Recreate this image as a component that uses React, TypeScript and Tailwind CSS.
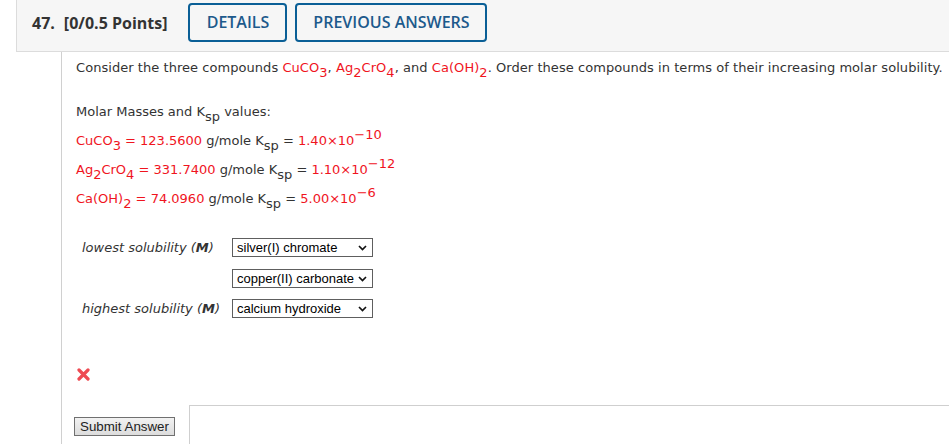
import React from "react";

const R = ({ children }: { children: React.ReactNode }) => (
  <span className="text-[#f0141e]">{children}</span>
);
const Sub = ({ children }: { children: React.ReactNode }) => (
  <span className="relative top-[5px]">{children}</span>
);
const Sup = ({ children }: { children: React.ReactNode }) => (
  <span className="relative -top-[6px]">{children}</span>
);

const Chevron = () => (
  <svg width="9" height="6" viewBox="0 0 9 6" className="absolute right-[5px] top-[6px] pointer-events-none">
    <path d="M1 1 L4.5 4.5 L8 1" fill="none" stroke="#111" strokeWidth="1.7" />
  </svg>
);

const Sel = ({ value }: { value: string }) => (
  <div className="relative w-[141px] h-[19px] border border-[#5e5e5e] bg-white">
    <div className="pl-[4px] text-[13px] leading-[17px] text-black whitespace-nowrap" style={{ fontFamily: '"Liberation Sans", Arial, sans-serif' }}>
      {value}
    </div>
    <Chevron />
  </div>
);

export default function App() {
  const verd = { fontFamily: '"DejaVu Sans", Verdana, sans-serif' };
  return (
    <div className="w-[949px] h-[444px] overflow-hidden bg-white">
      <div
        className="ml-[16px] h-[52px] bg-[#f6f6f6] border-l border-b border-[#dcdcdc] flex items-center"
        style={{ fontFamily: '"Open Sans", sans-serif' }}
      >
        <div className="pl-[15px] flex items-center text-[16px] font-bold text-[#333] -mt-[6px]">
          <span>47.</span>
          <span className="ml-[9px]">[0/0.5 Points]</span>
        </div>
        <div className="ml-[21px] -mt-[7px] h-[39px] w-[99px] border-2 border-[#0a5f96] rounded-[4px] flex items-center justify-center text-[16px] font-semibold text-[#1d5a8c]">
          DETAILS
        </div>
        <div className="ml-[8px] -mt-[7px] h-[39px] w-[192px] border-2 border-[#0a5f96] rounded-[4px] flex items-center justify-center text-[16px] font-semibold text-[#1d5a8c]">
          PREVIOUS ANSWERS
        </div>
      </div>
      <div className="ml-[61px] border-l border-[#d0d0d0] h-[400px] pl-[14px] text-[13px] text-[#333]" style={verd}>
        <div className="pt-[7px] leading-[18px] whitespace-nowrap tracking-[0.05px]">
          Consider the three compounds <R>CuCO<Sub>3</Sub></R>, <R>Ag<Sub>2</Sub>CrO<Sub>4</Sub></R>, and{" "}
          <R>Ca(OH)<Sub>2</Sub></R>. Order these compounds in terms of their increasing molar solubility.
        </div>
        <div className="mt-[26px] leading-[18px]">
          Molar Masses and K<Sub>sp</Sub> values:
        </div>
        <div className="mt-[11px] leading-[18px]">
          <R>CuCO<Sub>3</Sub> = 123.5600</R> g/mole K<Sub>sp</Sub> = <R>1.40×10<Sup>−10</Sup></R>
        </div>
        <div className="mt-[11px] leading-[18px]">
          <R>Ag<Sub>2</Sub>CrO<Sub>4</Sub> = 331.7400</R> g/mole K<Sub>sp</Sub> = <R>1.10×10<Sup>−12</Sup></R>
        </div>
        <div className="mt-[11px] leading-[18px]">
          <R>Ca(OH)<Sub>2</Sub> = 74.0960</R> g/mole K<Sub>sp</Sub> = <R>5.00×10<Sup>−6</Sup></R>
        </div>
        <div className="mt-[30px] ml-[6px] grid grid-cols-[150px_141px] gap-y-[11px] items-center">
          <div className="italic">
            lowest solubility (<b>M</b>)
          </div>
          <Sel value="silver(I) chromate" />
          <div />
          <Sel value="copper(II) carbonate" />
          <div className="italic">
            highest solubility (<b>M</b>)
          </div>
          <Sel value="calcium hydroxide" />
        </div>
        <div className="mt-[50px] ml-[1px]">
          <svg width="13" height="13" viewBox="0 0 13 13">
            <path d="M2 2 L11 11 M11 2 L2 11" stroke="#ee4a52" strokeWidth="3.2" strokeLinecap="round" />
          </svg>
        </div>
        <div className="flex mt-[24px]">
          <div
            className="mt-[12px] -ml-[2px] w-[101px] h-[19px] border border-[#707070] bg-[linear-gradient(#f2f2f2,#dcdcdc)] flex items-center justify-center text-[13.33px] text-[#222]"
            style={{ fontFamily: '"Liberation Sans", Arial, sans-serif' }}
          >
            Submit Answer
          </div>
          <div className="ml-[14px] flex-1 h-[60px] border-l border-t border-[#cfcfcf]" />
        </div>
      </div>
    </div>
  );
}
